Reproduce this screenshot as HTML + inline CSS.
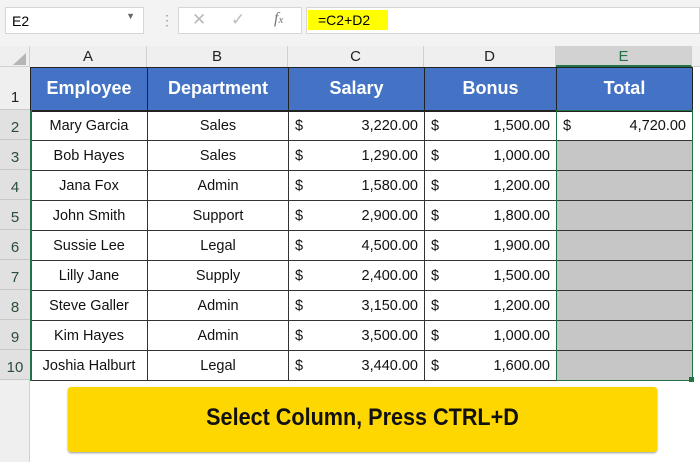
<!DOCTYPE html>
<html><head><style>
*{margin:0;padding:0;box-sizing:border-box}
body{width:700px;height:462px;position:relative;overflow:hidden;background:#fff;font-family:"Liberation Sans",Arial,sans-serif}
.a{position:absolute}
table{position:absolute;left:30px;top:67px;border-collapse:collapse;font-family:"Liberation Sans",sans-serif}
td{border:1.5px solid #333;font-size:14.5px;color:#111;height:30px;padding:0 6px}
th{background:#4472c4;color:#fff;font-size:18px;font-weight:bold;height:43px;border:1.5px solid #222;border-bottom:2px solid #222}
.c{text-align:center}
.m{text-align:right}
.m span{float:left}
.g{background:#c6c6c6}
.rh{position:absolute;left:0;width:30px;height:30px;font-size:15px;color:#2a4d3a;text-align:center;padding-top:9px;background:#e1e1e1;border-bottom:1px solid #c8c8c8}
.ch{position:absolute;top:46px;height:21px;font-size:15px;text-align:center;color:#222;background:#efefef;border-right:1px solid #d0d0d0;padding-top:2px}
</style></head><body>
<div class="a" style="left:0;top:0;width:700px;height:46px;background:#f3f3f3"></div>
<div class="a" style="left:5px;top:7px;width:139px;height:27px;background:#fff;border:1px solid #d6d6d6;font-size:14px;padding:5px 0 0 6px">E2<span style="position:absolute;right:8px;top:3px;font-size:9px;color:#666">▼</span></div>
<div class="a" style="left:160px;top:12px;color:#999;font-size:14px;letter-spacing:-1px">⋮</div>
<div class="a" style="left:178px;top:7px;width:124px;height:27px;background:#fff;border:1px solid #d6d6d6;color:#bbb;font-size:17px;padding-top:2px">
<span style="position:absolute;left:13px;top:2px">✕</span><span style="position:absolute;left:52px;top:2px">✓</span><span style="position:absolute;left:95px;top:2px;font-family:'Liberation Serif';font-style:italic;color:#777;font-size:16px">f<span style="font-size:11px">x</span></span></div>
<div class="a" style="left:306px;top:7px;width:394px;height:27px;background:#fff;border:1px solid #d6d6d6"></div>
<div class="a" style="left:308px;top:10px;width:80px;height:20px;background:#ffff00;font-size:14px;padding:2px 0 0 10px">=C2+D2</div>
<div class="a" style="left:0;top:46px;width:700px;height:21px;background:#efefef;border-bottom:1px solid #d0d0d0"></div>
<div class="a" style="left:0;top:46px;width:30px;height:21px;border-right:1px solid #d0d0d0"></div>
<div class="a" style="left:13px;top:53px;width:0;height:0;border-left:13px solid transparent;border-bottom:12px solid #b5b5b5"></div>
<div class="ch" style="left:30px;width:117px">A</div>
<div class="ch" style="left:147px;width:141px">B</div>
<div class="ch" style="left:288px;width:136px">C</div>
<div class="ch" style="left:424px;width:132px">D</div>
<div class="ch" style="left:556px;width:136px;background:#d2d2d2;color:#217346;border-bottom:2px solid #217346">E</div>
<div class="a" style="left:0;top:67px;width:30px;height:395px;background:#efefef;border-right:1px solid #d0d0d0"></div>
<div class="rh" style="top:67px;height:43px;padding-top:22px;background:#efefef;color:#222">1</div>
<div class="rh" style="top:110px">2</div><div class="rh" style="top:140px">3</div><div class="rh" style="top:170px">4</div><div class="rh" style="top:200px">5</div><div class="rh" style="top:230px">6</div><div class="rh" style="top:260px">7</div><div class="rh" style="top:290px">8</div><div class="rh" style="top:320px">9</div><div class="rh" style="top:350px">10</div>
<table>
<colgroup><col style="width:117px"><col style="width:141px"><col style="width:136px"><col style="width:132px"><col style="width:136px"></colgroup>
<tr><th>Employee</th><th>Department</th><th>Salary</th><th>Bonus</th><th>Total</th></tr>
<tr><td class="c">Mary Garcia</td><td class="c">Sales</td><td class="m"><span>$</span>3,220.00</td><td class="m"><span>$</span>1,500.00</td><td class="m"><span>$</span>4,720.00</td></tr>
<tr><td class="c">Bob Hayes</td><td class="c">Sales</td><td class="m"><span>$</span>1,290.00</td><td class="m"><span>$</span>1,000.00</td><td class="g"></td></tr>
<tr><td class="c">Jana Fox</td><td class="c">Admin</td><td class="m"><span>$</span>1,580.00</td><td class="m"><span>$</span>1,200.00</td><td class="g"></td></tr>
<tr><td class="c">John Smith</td><td class="c">Support</td><td class="m"><span>$</span>2,900.00</td><td class="m"><span>$</span>1,800.00</td><td class="g"></td></tr>
<tr><td class="c">Sussie Lee</td><td class="c">Legal</td><td class="m"><span>$</span>4,500.00</td><td class="m"><span>$</span>1,900.00</td><td class="g"></td></tr>
<tr><td class="c">Lilly Jane</td><td class="c">Supply</td><td class="m"><span>$</span>2,400.00</td><td class="m"><span>$</span>1,500.00</td><td class="g"></td></tr>
<tr><td class="c">Steve Galler</td><td class="c">Admin</td><td class="m"><span>$</span>3,150.00</td><td class="m"><span>$</span>1,200.00</td><td class="g"></td></tr>
<tr><td class="c">Kim Hayes</td><td class="c">Admin</td><td class="m"><span>$</span>3,500.00</td><td class="m"><span>$</span>1,000.00</td><td class="g"></td></tr>
<tr><td class="c">Joshia Halburt</td><td class="c">Legal</td><td class="m"><span>$</span>3,440.00</td><td class="m"><span>$</span>1,600.00</td><td class="g"></td></tr>
</table>
<div class="a" style="left:556px;top:110px;width:137px;height:271px;border:1.5px solid #217346"></div>
<div class="a" style="left:689px;top:377px;width:5px;height:5px;background:#217346"></div>
<div class="a" style="left:30px;top:110px;width:2px;height:271px;background:#217346"></div>
<div class="a" style="left:68px;top:387px;width:589px;height:65px;background:#ffd700;border-radius:3px;box-shadow:0 1px 2px #999;text-align:center;padding-top:17px;color:#111"><div style="font-weight:bold;font-size:24px;transform:scaleX(0.9);white-space:nowrap">Select Column, Press CTRL+D</div></div>
</body></html>
